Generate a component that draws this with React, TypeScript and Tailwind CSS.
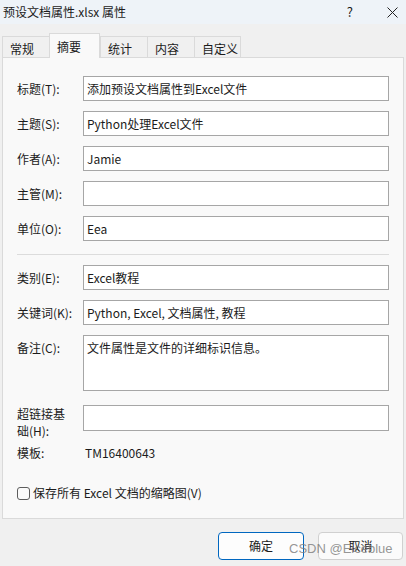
const font = { fontFamily: '"Noto Sans CJK SC", "Noto Sans", sans-serif' };

function Field({ label, value, tall }: { label: string; value?: string; tall?: boolean }) {
  return (
    <div className="flex items-start">
      <div className="w-[66px] pt-[5px] leading-[15px] text-[12px] text-[#1b1b1b]">{label}</div>
      <div
        className={`w-[306px] ${tall ? 'h-[56px]' : 'h-[25px]'} border border-[#a6a6a6] bg-white px-[3px] pt-[4px] text-[12px] leading-[15px] text-[#1b1b1b]`}
      >
        {value}
      </div>
    </div>
  );
}

function Tab({ label, active }: { label: string; active?: boolean }) {
  return active ? (
    <div className="relative z-10 -mb-px flex h-[25px] w-[51px] items-start border border-b-0 border-[#dadada] bg-[#f9f9f9] pl-[7px] pt-[4px] text-[12px] text-[#1b1b1b]">
      {label}
    </div>
  ) : (
    <div className="flex h-[21px] items-start border border-b-0 border-r-0 border-[#dadada] bg-[#f0f0f0] pl-[7px] pt-[3px] text-[12px] text-[#1b1b1b]">
      {label}
    </div>
  );
}

export default function App() {
  return (
    <div className="relative flex h-[566px] w-[406px] flex-col overflow-hidden bg-[#f0f0f0]" style={font}>
      <div className="flex h-[24px] items-center bg-[#eef3f8] pl-[3px] text-[12px] text-[#1b1b1b]">
        <span>预设文档属性.xlsx 属性</span>
        <span className="ml-auto mr-[34px] text-[13px]">?</span>
        <svg width="11" height="11" viewBox="0 0 11 11" className="mr-[8px]">
          <path d="M0.5 0.5 L10.5 10.5 M10.5 0.5 L0.5 10.5" stroke="#222" strokeWidth="1" />
        </svg>
      </div>

      <div className="flex items-end pl-[2px] pt-[9px]">
        <div className="w-[47px]"><Tab label="常规" /></div>
        <Tab label="摘要" active />
        <div className="w-[47px]"><Tab label="统计" /></div>
        <div className="w-[47px]"><Tab label="内容" /></div>
        <div className="w-[47px] border-r border-[#dadada]"><Tab label="自定义" /></div>
      </div>

      <div className="mx-[2px] h-[462px] border border-[#dadada] bg-[#f9f9f9] pl-[14px] pt-[18px]">
        <div className="flex flex-col gap-[10px]">
          <Field label="标题(T):" value="添加预设文档属性到Excel文件" />
          <Field label="主题(S):" value="Python处理Excel文件" />
          <Field label="作者(A):" value="Jamie" />
          <Field label="主管(M):" />
          <Field label="单位(O):" value="Eea" />
        </div>
        <div className="mb-[10px] mt-[13px] h-px w-[372px] bg-[#dcdcdc]" />
        <div className="flex flex-col gap-[10px]">
          <Field label="类别(E):" value="Excel教程" />
          <Field label="关键词(K):" value="Python, Excel, 文档属性, 教程" />
          <Field label="备注(C):" value="文件属性是文件的详细标识信息。" tall />
          <div className="mt-[4px] flex items-start">
            <div className="w-[66px] text-[12px] leading-[17px] text-[#1b1b1b]">
              超链接基
              <br />
              础(H):
            </div>
            <div className="h-[26px] w-[306px] border border-[#a6a6a6] bg-white" />
          </div>
        </div>
        <div className="mt-[6px] flex text-[12px] leading-[16px] text-[#1b1b1b]">
          <span className="w-[68px]">模板:</span>
          <span>TM16400643</span>
        </div>
        <div className="mt-[24px] flex items-center gap-[3px] text-[12px] leading-[16px] text-[#1b1b1b]">
          <div className="h-[13px] w-[13px] rounded-[3px] border border-[#5d5d5d] bg-[#fbfbfb]" />
          <span>保存所有 Excel 文档的缩略图(V)</span>
        </div>
      </div>

      <div className="mt-[13px] flex justify-end gap-[14px] pr-[3px]">
        <div className="flex h-[28px] w-[86px] items-center justify-center rounded-[4px] border border-[#0067c0] bg-[#fdfdfd] text-[12px] text-[#1b1b1b]">
          确定
        </div>
        <div className="flex h-[28px] w-[85px] items-center justify-center rounded-[4px] border border-[#d0d0d0] bg-[#fbfbfb] text-[12px] text-[#1b1b1b]">
          取消
        </div>
      </div>

      <div
        className="absolute left-[289px] top-[539px] text-[13px] text-[#7a7a7a]/80"
        style={{ fontFamily: '"Liberation Sans", Arial, sans-serif' }}
      >
        CSDN @Eiceblue
      </div>
    </div>
  );
}
